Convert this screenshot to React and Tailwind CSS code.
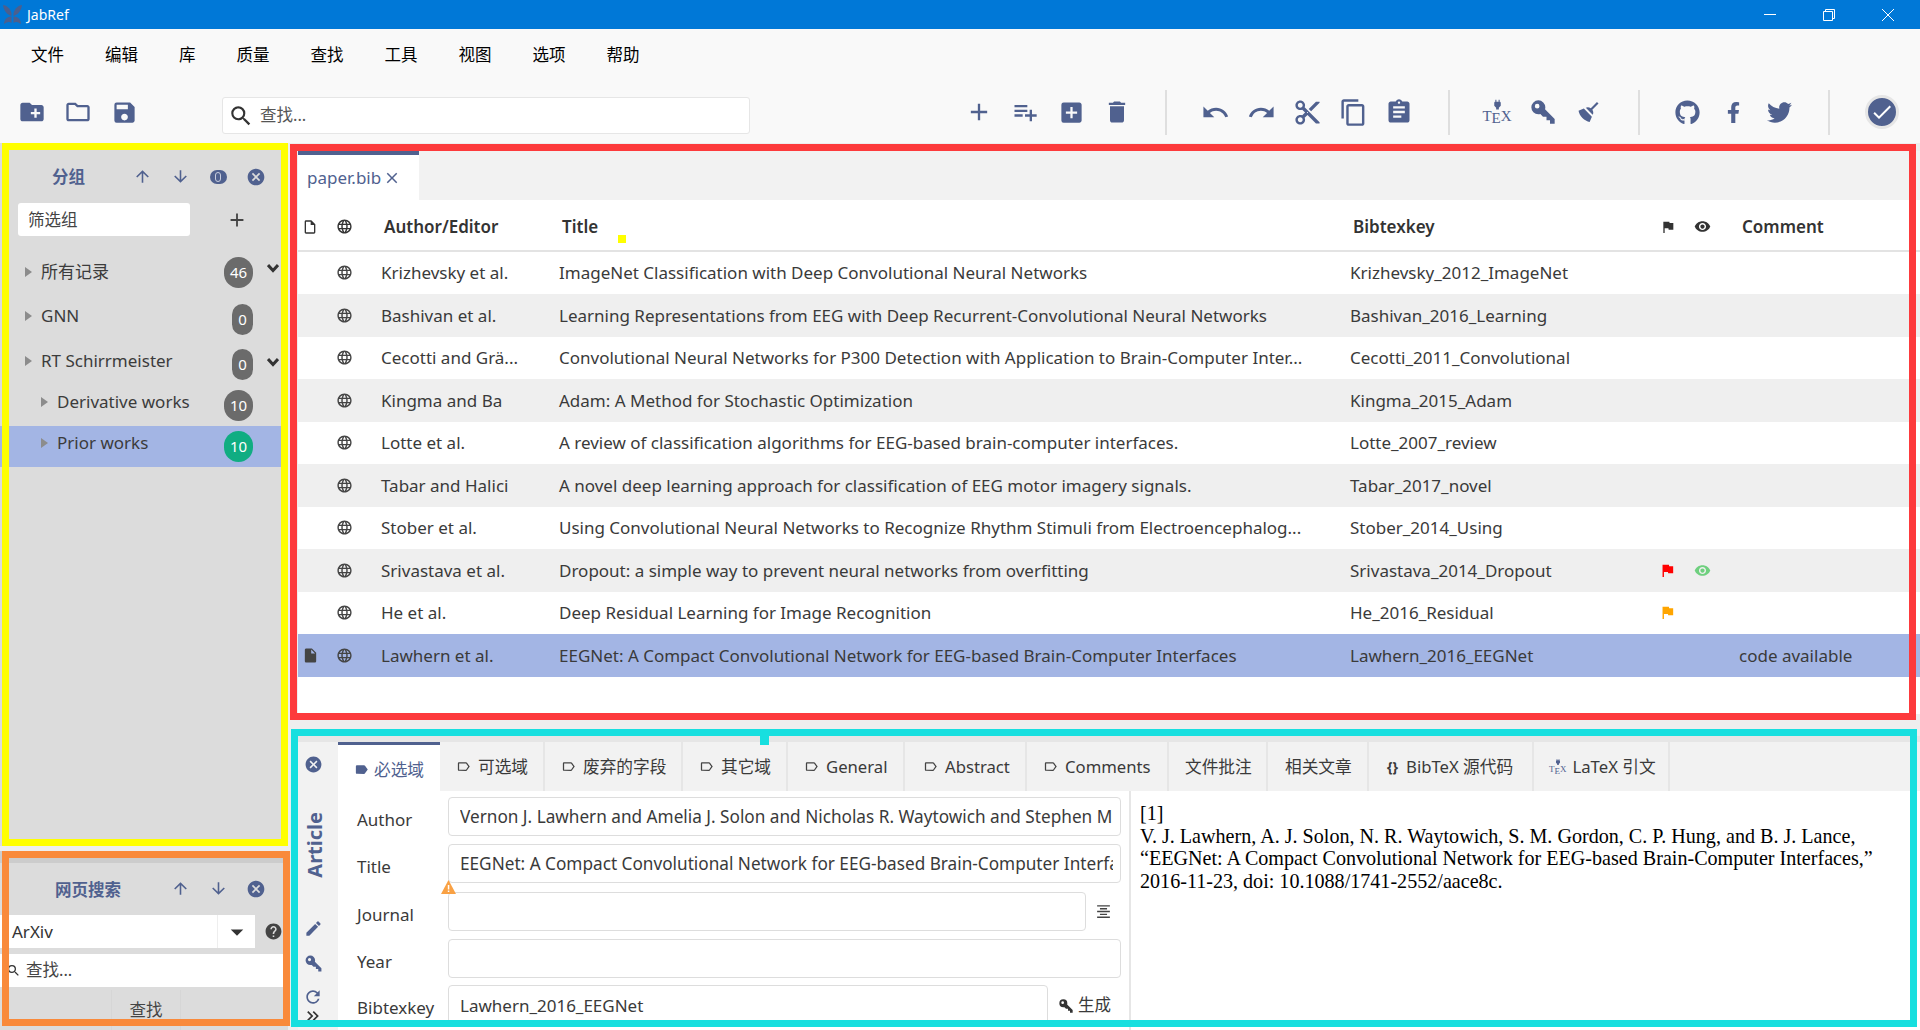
import {
  MdCreateNewFolder, MdOutlineFolder, MdSave, MdAdd, MdPlaylistAdd, MdAddBox, MdDelete, MdUndo, MdRedo,
  MdContentCut, MdContentCopy, MdAssignment, MdCheck, MdPower, MdArrowUpward, MdArrowDownward, MdCancel,
  MdLanguage, MdOutlineInsertDriveFile, MdInsertDriveFile, MdFlag, MdArrowDropDown, MdVisibility,
  MdHelp, MdSearch, MdLabel, MdLabelOutline, MdEdit, MdRefresh, MdKeyboardDoubleArrowRight, MdFormatAlignCenter,
  MdClose,
} from 'react-icons/md';
import { FaGithub, FaFacebookF, FaTwitter } from 'react-icons/fa';

const BLUE = '#50618f';

function KeyIcon({ size = 24, color = BLUE }) {
  return (
    <svg width={size} height={size} viewBox="0 0 24 24" fill={color}>
      <path d="M22,18V22H18V19H15V16H12L9.74,13.74C9.19,13.91 8.61,14 8,14A6,6 0 0,1 2,8A6,6 0 0,1 8,2A6,6 0 0,1 14,8C14,8.61 13.91,9.19 13.74,9.74L22,18M7,5A2,2 0 0,0 5,7A2,2 0 0,0 7,9A2,2 0 0,0 9,7A2,2 0 0,0 7,5Z" />
    </svg>
  );
}

function BroomIcon({ size = 24 }) {
  return (
    <svg width={size} height={size} viewBox="0 0 24 24" fill={BLUE}>
      <path d="M19.36,2.72L20.78,4.14L15.06,9.85C16.13,11.39 16.28,13.24 15.38,14.44L9.06,8.12C10.26,7.22 12.11,7.37 13.65,8.44L19.36,2.72M5.93,17.57C3.92,15.56 2.69,13.16 2.35,10.92L7.23,8.83L14.67,16.27L12.58,21.15C10.34,20.81 7.94,19.58 5.93,17.57Z" />
    </svg>
  );
}

function Logo() {
  return (
    <svg width="21" height="21" viewBox="0 0 21 21" fill="#4b5f8e">
      <path d="M1 1 C4 1 8 4 9.5 9 L9.5 12 C6 11 2 8 1 1Z" />
      <path d="M20 1 C17 1 13 4 11.5 9 L11.5 12 C15 11 19 8 20 1Z" />
      <path d="M2 20 C2 16 5 12 9.5 12.5 L9.5 19 C7 17 5 18 2 20Z" />
      <path d="M19 20 C19 16 16 12 11.5 12.5 L11.5 19 C14 17 16 18 19 20Z" />
    </svg>
  );
}

function TexIcon({ small }) {
  return (
    <div className="flex flex-col items-center" style={{ color: BLUE }}>
      <MdPower size={small ? 8 : 13} />
      <span className={`font-['Liberation_Serif',serif] leading-none ${small ? 'text-[9px] -mt-[1px]' : 'text-[15px] -mt-[2px]'}`}>
        T<span className="align-[-2px]">E</span>X
      </span>
    </div>
  );
}

function ToolBtn({ children }) {
  return <div className="w-[46px] h-[46px] shrink-0 flex items-center justify-center">{children}</div>;
}

function Sep({ className = '' }) {
  return <div className={`w-[2px] h-[45px] bg-[#dfdfdf] shrink-0 ${className}`} />;
}

function Toolbar() {
  return (
    <div className="h-[62px] flex items-center pl-[9px] bg-[#f9f9f9]">
      <ToolBtn><MdCreateNewFolder size={28} color={BLUE} /></ToolBtn>
      <ToolBtn><MdOutlineFolder size={28} color={BLUE} /></ToolBtn>
      <ToolBtn><MdSave size={27} color={BLUE} /></ToolBtn>
      <div className="ml-[75px] mt-[7px] w-[528px] h-[37px] shrink-0 bg-white border border-[#e6e6e6] rounded-[3px] flex items-center pl-[5px]">
        <MdSearch size={26} color="#333" />
        <input readOnly placeholder="查找..." className="ml-[6px] flex-1 min-w-0 bg-transparent outline-none text-[16.5px] placeholder:text-[#555]" />
      </div>
      <div className="ml-[206px] flex">
        <ToolBtn><MdAdd size={28} color={BLUE} /></ToolBtn>
        <ToolBtn><MdPlaylistAdd size={28} color={BLUE} /></ToolBtn>
        <ToolBtn><MdAddBox size={27} color={BLUE} /></ToolBtn>
        <ToolBtn><MdDelete size={28} color={BLUE} /></ToolBtn>
      </div>
      <Sep className="ml-[25px]" />
      <div className="ml-[25px] flex">
        <ToolBtn><MdUndo size={29} color={BLUE} /></ToolBtn>
        <ToolBtn><MdRedo size={29} color={BLUE} /></ToolBtn>
        <ToolBtn><MdContentCut size={29} color={BLUE} /></ToolBtn>
        <ToolBtn><MdContentCopy size={29} color={BLUE} /></ToolBtn>
        <ToolBtn><MdAssignment size={28} color={BLUE} /></ToolBtn>
      </div>
      <Sep className="ml-[26px]" />
      <div className="ml-[24px] flex">
        <ToolBtn><TexIcon /></ToolBtn>
        <ToolBtn><KeyIcon size={28} /></ToolBtn>
        <ToolBtn><BroomIcon size={26} /></ToolBtn>
      </div>
      <Sep className="ml-[26px]" />
      <div className="ml-[24px] flex">
        <ToolBtn><FaGithub size={25} color={BLUE} /></ToolBtn>
        <ToolBtn><FaFacebookF size={21} color={BLUE} /></ToolBtn>
        <ToolBtn><FaTwitter size={25} color={BLUE} /></ToolBtn>
      </div>
      <Sep className="ml-[26px]" />
      <div className="ml-[35px] w-[34px] h-[34px] shrink-0 rounded-full bg-[#50618f] border-[3px] border-[#e6e6e6] flex items-center justify-center">
        <MdCheck size={24} color="#fff" />
      </div>
    </div>
  );
}

function PanelTools({ first, chain }) {
  return (
    <div className={`flex gap-[14px] ${first}`}>
      <div className="w-6 flex justify-center"><MdArrowUpward size={19} color={BLUE} /></div>
      <div className="w-6 flex justify-center"><MdArrowDownward size={19} color={BLUE} /></div>
      {chain && (
        <div className="w-6 flex justify-center items-center">
          <div className="w-[17px] h-[14px] rounded-full bg-[#50618f] flex items-center justify-center">
            <div className="w-[6px] h-[10px] rounded-full border border-[#c9cede]" />
          </div>
        </div>
      )}
      <div className="w-6 flex justify-center"><MdCancel size={20} color={BLUE} /></div>
    </div>
  );
}

const GROUPS = [
  { name: '所有记录', count: 46, h: 'h-[43px]', pad: 'pb-[2px]', wide: true, chev: 'pb-[10px]' },
  { name: 'GNN', count: 0, h: 'h-[50px]', pad: 'pb-[6px]' },
  { name: 'RT Schirrmeister', count: 0, h: 'h-[40px]', pad: 'pb-[6px]', chev: 'pb-[4px]' },
  { name: 'Derivative works', count: 10, h: 'h-[42px]', pad: 'pb-[6px]', depth: 1, wide: true },
  { name: 'Prior works', count: 10, h: 'h-[41px]', pad: 'pb-[8px]', depth: 1, wide: true, active: true },
];

function GroupRow({ g }) {
  return (
    <div className={`${g.h} flex items-center ${g.active ? 'bg-[#a3b5e4]' : ''}`}>
      <div className={`flex items-center flex-1 min-w-0 ${g.depth ? 'pl-[41px]' : 'pl-[25px]'} ${g.pad}`}>
        <span className="w-0 h-0 border-y-[5px] border-y-transparent border-l-[7px] border-l-[#8c8c8c]" />
        <span className="ml-[9px] text-[17px] text-[#3b3b3b] whitespace-nowrap">{g.name}</span>
      </div>
      <div className={`h-[31px] ${g.wide ? 'w-[29px]' : 'w-[21px]'} rounded-full flex items-center justify-center text-white text-[15px] ${g.active ? 'bg-[#10ad82]' : 'bg-[#6b6b6b]'}`}>
        {g.count}
      </div>
      <div className={`w-[35px] pl-[14px] ${g.chev || ''}`}>
        {g.chev && (
          <svg width="12" height="10" viewBox="0 0 12 10" fill="none" stroke="#333" strokeWidth="3" className="block">
            <path d="M1 2L6 7.5L11 2" />
          </svg>
        )}
      </div>
    </div>
  );
}

function GroupsPanel() {
  return (
    <div className="h-[703px] bg-[#dcdcdc] flex flex-col pt-[7px]">
      <div className="h-[53px] flex items-center pl-[52px]">
        <span className="w-[34px] pt-[2px] text-[16.5px] font-bold text-[#50618f] whitespace-nowrap">分组</span>
        <PanelTools first="ml-[44px]" chain />
      </div>
      <div className="h-[33px] flex items-center pl-[18px]">
        <div className="w-[172px] h-[33px] pt-[2px] bg-white rounded-[3px] flex items-center pl-[10px]">
          <input readOnly placeholder="筛选组" className="w-full bg-transparent outline-none text-[16.5px] placeholder:text-[#444]" />
        </div>
        <div className="ml-[35px] w-6 flex justify-center"><MdAdd size={22} color="#444" /></div>
      </div>
      <div className="mt-[15px]">
        {GROUPS.map((g) => <GroupRow key={g.name} g={g} />)}
      </div>
    </div>
  );
}

function WebSearchPanel() {
  return (
    <div className="flex-1 mt-[5px] bg-[#dcdcdc] flex flex-col">
      <div className="h-[12px] bg-[#cccccc]" />
      <div className="h-[52px] flex items-center pl-[55px]">
        <span className="w-[68px] pt-[2px] text-[16.5px] font-bold text-[#50618f] whitespace-nowrap">网页搜索</span>
        <PanelTools first="ml-[45px]" />
      </div>
      <div className="h-[33px] flex items-center">
        <div className="w-[255px] h-full bg-white flex items-center">
          <div className="w-[218px] h-full pl-[12px] flex items-center text-[17px] text-[#333] border-r border-[#eeeeee]">ArXiv</div>
          <div className="flex-1 flex justify-center"><MdArrowDropDown size={30} color="#333" /></div>
        </div>
        <div className="ml-[9px]"><MdHelp size={19} color="#444" /></div>
      </div>
      <div className="mt-[6px] h-[33px] bg-white flex items-center pl-[6px]">
        <MdSearch size={15} color="#333" />
        <input readOnly placeholder="查找..." className="ml-[5px] flex-1 min-w-0 bg-transparent outline-none text-[16.5px] placeholder:text-[#444]" />
      </div>
      <div className="mt-[1px] flex-1 flex items-center justify-center pl-[4px] pt-[2px]">
        <div className="w-[70px] h-full flex items-center justify-center text-[16.5px] text-[#444] border-x border-[#d6d6d6]">查找</div>
      </div>
    </div>
  );
}

const COLS = 'grid grid-cols-[30px_33px_198px_791px_304px_27px_42px_1fr] items-center';

const ENTRIES = [
  ['Krizhevsky et al.', 'ImageNet Classification with Deep Convolutional Neural Networks', 'Krizhevsky_2012_ImageNet'],
  ['Bashivan et al.', 'Learning Representations from EEG with Deep Recurrent-Convolutional Neural Networks', 'Bashivan_2016_Learning'],
  ['Cecotti and Grä...', 'Convolutional Neural Networks for P300 Detection with Application to Brain-Computer Inter...', 'Cecotti_2011_Convolutional'],
  ['Kingma and Ba', 'Adam: A Method for Stochastic Optimization', 'Kingma_2015_Adam'],
  ['Lotte et al.', 'A review of classification algorithms for EEG-based brain-computer interfaces.', 'Lotte_2007_review'],
  ['Tabar and Halici', 'A novel deep learning approach for classification of EEG motor imagery signals.', 'Tabar_2017_novel'],
  ['Stober et al.', 'Using Convolutional Neural Networks to Recognize Rhythm Stimuli from Electroencephalog...', 'Stober_2014_Using'],
  ['Srivastava et al.', 'Dropout: a simple way to prevent neural networks from overfitting', 'Srivastava_2014_Dropout', '#ff0000', '#6fd07f'],
  ['He et al.', 'Deep Residual Learning for Image Recognition', 'He_2016_Residual', '#ffa500'],
  ['Lawhern et al.', 'EEGNet: A Compact Convolutional Network for EEG-based Brain-Computer Interfaces', 'Lawhern_2016_EEGNet', null, null, 'code available'],
];

function EntryRow({ e, i }) {
  const [author, title, key, flag, eye, comment] = e;
  const selected = i === ENTRIES.length - 1;
  const bg = selected ? 'bg-[#a3b5e4]' : i % 2 ? 'bg-[#efefef]' : 'bg-white';
  return (
    <div className={`${COLS} h-[42.5px] text-[17px] text-[#3a3a3a] whitespace-nowrap ${bg}`}>
      <div className="pl-[4px]">{selected && <MdInsertDriveFile size={17} color="#444" />}</div>
      <div className="flex justify-center"><MdLanguage size={17} color="#444" /></div>
      <div className="pl-[20px]">{author}</div>
      <div>{title}</div>
      <div>{key}</div>
      <div className="flex justify-center">{flag && <MdFlag size={17} color={flag} />}</div>
      <div className="flex justify-center">{eye && <MdVisibility size={17} color={eye} />}</div>
      <div className="pl-[16px]">{comment}</div>
    </div>
  );
}

function MainTable() {
  return (
    <div className="h-[563px] bg-white flex flex-col">
      <div className="h-[49px] bg-[#f2f2f2] flex shrink-0">
        <div className="w-[121px] bg-white border-t-4 border-[#50618f] flex items-center pl-[9px] text-[17px] text-[#50618f]">
          paper.bib
          <MdClose size={18} className="ml-[2px]" />
        </div>
      </div>
      <div className={`${COLS} h-[51.5px] pt-[4px] shrink-0 border-b-2 border-[#e3e3e3] text-[17px] font-semibold text-[#333]`}>
        <div className="pl-[4px]"><MdOutlineInsertDriveFile size={16} color="#333" /></div>
        <div className="flex justify-center"><MdLanguage size={17} color="#333" /></div>
        <div className="pl-[23px]">Author/Editor</div>
        <div className="pl-[3px]">Title</div>
        <div className="pl-[3px]">Bibtexkey</div>
        <div className="flex justify-center"><MdFlag size={16} color="#333" /></div>
        <div className="flex justify-center"><MdVisibility size={17} color="#333" /></div>
        <div className="pl-[19px]">Comment</div>
      </div>
      <div>
        {ENTRIES.map((e, i) => <EntryRow key={e[2]} e={e} i={i} />)}
      </div>
    </div>
  );
}

const TABS = [
  { label: '必选域', w: 'w-[102px]', icon: 'active', pad: 'pl-[16px]' },
  { label: '可选域', w: 'w-[105px]', icon: 'label', pad: 'pl-[16px]' },
  { label: '废弃的字段', w: 'w-[138px]', icon: 'label', pad: 'pl-[16px]' },
  { label: '其它域', w: 'w-[105px]', icon: 'label', pad: 'pl-[16px]' },
  { label: 'General', w: 'w-[117px]', icon: 'label', pad: 'pl-[16px]' },
  { label: 'Abstract', w: 'w-[122px]', icon: 'label', pad: 'pl-[18px]' },
  { label: 'Comments', w: 'w-[142px]', icon: 'label', pad: 'pl-[16px]' },
  { label: '文件批注', w: 'w-[99px]', pad: 'pl-[16px]' },
  { label: '相关文章', w: 'w-[101px]', pad: 'pl-[17px]' },
  { label: 'BibTeX 源代码', w: 'w-[165px]', icon: 'braces', pad: 'pl-[18px]' },
  { label: 'LaTeX 引文', w: 'w-[136px]', icon: 'tex', pad: 'pl-[15px]' },
];

function EditorTab({ t }) {
  const active = t.icon === 'active';
  return (
    <div className={`${t.w} ${t.pad} shrink-0 flex items-center whitespace-nowrap text-[16.7px] ${active ? 'bg-white border-t-[3px] border-[#50618f] text-[#50618f] pt-[3px]' : 'border-r-2 border-[#e6e6e6] text-[#3a3a3a]'}`}>
      {active && <MdLabel size={15} color={BLUE} className="mr-[5px]" />}
      {t.icon === 'label' && <MdLabelOutline size={15} color="#444" className="mr-[7px]" />}
      {t.icon === 'braces' && <span className="mr-[8px] text-[14px] font-bold">{'{}'}</span>}
      {t.icon === 'tex' && <span className="mr-[6px]"><TexIcon small /></span>}
      {t.label}
    </div>
  );
}

function Field({ label, value, mt, children }) {
  return (
    <div className={`flex ${mt || ''}`}>
      <div className="w-[110px] pl-[19px] pt-[10px] text-[17px] text-[#3a3a3a] shrink-0 whitespace-nowrap">{label}</div>
      <div className="flex-1 min-w-0 flex items-center pr-[8px]">{children || (
        <input readOnly value={value || ''} className="w-full h-[39px] bg-white border border-[#dddddd] rounded-[4px] pl-[11px] pr-[7px] text-[17.2px] text-[#3a3a3a] outline-none" />
      )}</div>
    </div>
  );
}

function EntryEditor() {
  return (
    <div className="mt-[22px] flex-1 flex flex-col min-h-0 bg-white">
      <div className="h-[6px] bg-[#e6e6e6] shrink-0" />
      <div className="flex flex-1 min-h-0">
        <div className="w-[40px] pr-[10px] bg-[#f2f2f2] flex flex-col items-center shrink-0">
          <div className="mt-[13px]"><MdCancel size={19} color={BLUE} /></div>
          <div className="mt-[38px] ml-[3px] text-[20px] leading-none font-bold text-[#50618f] [writing-mode:vertical-rl] rotate-180">Article</div>
          <div className="mt-[41px]"><MdEdit size={19} color={BLUE} /></div>
          <div className="mt-[16px]"><KeyIcon size={19} /></div>
          <div className="mt-[14px]"><MdRefresh size={20} color={BLUE} /></div>
          <div className="-mt-[1px]"><MdKeyboardDoubleArrowRight size={20} color="#333" /></div>
        </div>
        <div className="flex-1 min-w-0 flex flex-col">
          <div className="h-[49px] bg-[#f2f2f2] flex shrink-0">
            {TABS.map((t) => <EditorTab key={t.label} t={t} />)}
          </div>
          <div className="flex-1 flex min-h-0">
            <div className="w-[791px] shrink-0 pt-[6px] flex flex-col">
              <Field label="Author" value="Vernon J. Lawhern and Amelia J. Solon and Nicholas R. Waytowich and Stephen M. Gordon and Chou P. Hung and Brent J. Lance" />
              <div className="relative mt-[8px]">
                <Field label="Title" value="EEGNet: A Compact Convolutional Network for EEG-based Brain-Computer Interfaces" />
                <svg width="15" height="14" viewBox="0 0 15 14" className="absolute left-[103px] top-[36px]">
                  <path d="M7.5 0L15 14H0Z" fill="#f9a144" />
                  <rect x="6.8" y="5" width="1.5" height="4.5" fill="#fff" />
                  <rect x="6.8" y="10.5" width="1.5" height="1.5" fill="#fff" />
                </svg>
              </div>
              <Field label="Journal" mt="mt-[9px]">
                <input readOnly className="flex-1 min-w-0 h-[39px] bg-white border border-[#dddddd] rounded-[4px] outline-none" />
                <div className="w-[35px] flex justify-center"><MdFormatAlignCenter size={17} color="#444" /></div>
              </Field>
              <Field label="Year" mt="mt-[8px]" />
              <Field label="Bibtexkey" mt="mt-[7px]">
                <input readOnly value="Lawhern_2016_EEGNet" className="flex-1 min-w-0 h-[41px] bg-white border border-[#dddddd] rounded-[4px] pl-[11px] text-[17px] text-[#3a3a3a] outline-none" />
                <div className="w-[73px] pl-[10px] flex items-center text-[16.5px] text-[#3a3a3a]"><KeyIcon size={16} color="#333" /><span className="ml-[4px]">生成</span></div>
              </Field>
            </div>
            <div className="flex-1 min-w-0 border-l-2 border-[#e6e6e6] pl-[9px] pt-[11px] font-['Liberation_Serif',serif] text-[20.1px] leading-[22.5px] text-black whitespace-nowrap">
              <div>[1]</div>
              <div>V. J. Lawhern, A. J. Solon, N. R. Waytowich, S. M. Gordon, C. P. Hung, and B. J. Lance,</div>
              <div>“EEGNet: A Compact Convolutional Network for EEG-based Brain-Computer Interfaces,”</div>
              <div>2016-11-23, doi: 10.1088/1741-2552/aace8c.</div>
            </div>
          </div>
        </div>
      </div>
    </div>
  );
}

// annotation rectangles sit on top of the app
function Annotations() {
  return (
    <>
      <div className="absolute left-[2px] top-[143px] w-[286px] h-[703px] border-[7px] border-[#ffff00]" />
      <div className="absolute left-[2px] top-[851px] w-[288px] h-[175px] border-[7px] border-[#f98a3b]" />
      <div className="absolute left-[290px] top-[144px] w-[1626px] h-[576px] border-[7px] border-[#fd3a3c]" />
      <div className="absolute left-[291px] top-[729px] w-[1626px] h-[298px] border-[7px] border-[#17dfdf]" />
      <div className="absolute left-[618px] top-[235px] w-[8px] h-[8px] bg-[#ffff00]" />
      <div className="absolute left-[760px] top-[736px] w-[9px] h-[9px] bg-[#17dfdf]" />
    </>
  );
}

export default function App() {
  return (
    <div className="relative w-[1920px] h-[1030px] overflow-hidden flex flex-col bg-[#eeeeee] font-['Noto_Sans','Noto_Sans_CJK_SC',sans-serif]">
      <div className="h-[29px] shrink-0 bg-[#0078d7] flex items-center text-white">
        <div className="pl-[2px]"><Logo /></div>
        <span className="ml-[4px] text-[14px]">JabRef</span>
        <div className="ml-auto flex pr-[3px]">
          <div className="w-[59px] flex justify-center items-center"><div className="w-[12px] h-[1px] bg-white" /></div>
          <div className="w-[59px] flex justify-center">
            <svg width="12" height="12" viewBox="0 0 12 12" fill="none" stroke="#fff"><path d="M.5 2.5h9v9h-9zM2.5 2.5v-2h9v9h-2" /></svg>
          </div>
          <div className="w-[59px] flex justify-center">
            <svg width="12" height="12" viewBox="0 0 12 12" fill="none" stroke="#fff"><path d="M0 0L12 12M12 0L0 12" /></svg>
          </div>
        </div>
      </div>
      <div className="h-[52px] shrink-0 bg-[#f9f9f9] flex items-center gap-[41px] pl-[31px] text-[16.5px] text-black">
        {['文件', '编辑', '库', '质量', '查找', '工具', '视图', '选项', '帮助'].map((m) => <span key={m}>{m}</span>)}
      </div>
      <Toolbar />
      <div className="flex-1 flex min-h-0">
        <div className="w-[288px] shrink-0 flex flex-col">
          <GroupsPanel />
          <WebSearchPanel />
        </div>
        <div className="flex-1 min-w-0 pl-[10px] pt-[8px] flex flex-col">
          <MainTable />
          <EntryEditor />
        </div>
      </div>
      <Annotations />
    </div>
  );
}
